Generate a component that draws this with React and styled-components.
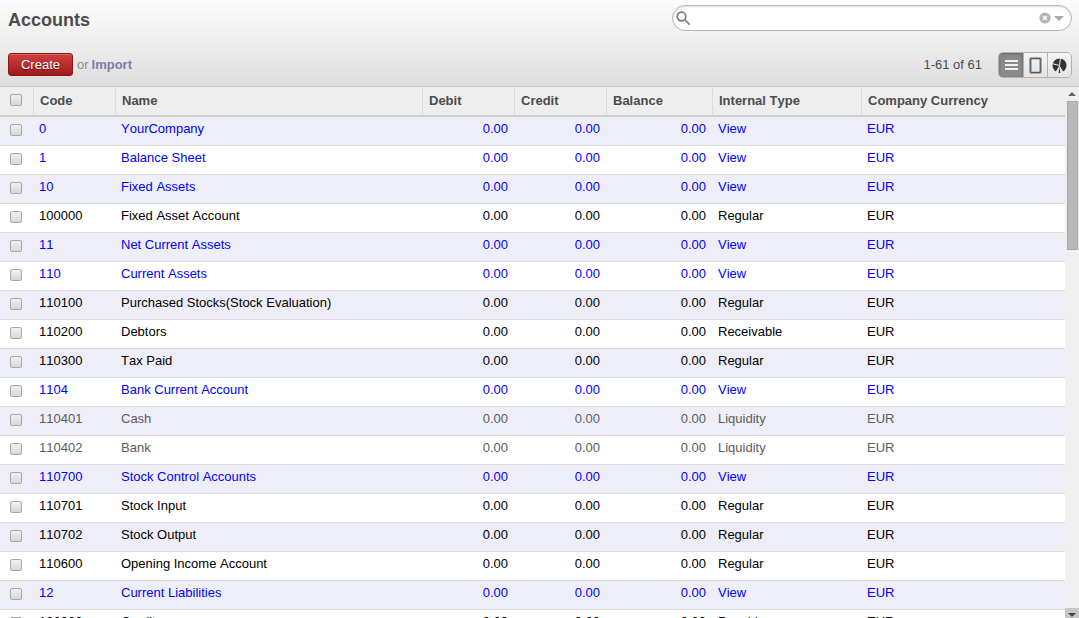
import React from "react";
import styled, { createGlobalStyle } from "styled-components";

const GlobalStyle = createGlobalStyle`
  html, body {
    margin: 0;
    padding: 0;
    height: 100%;
    overflow: hidden;
    background: #fff;
    font-family: "Liberation Sans", Arial, sans-serif;
    font-size: 13px;
    font-kerning: none;
    color: #4c4c4c;
  }
`;

const VIEW = "view";
const DIM = "dim";

const accounts = [
  ["0", "YourCompany", "View", VIEW],
  ["1", "Balance Sheet", "View", VIEW],
  ["10", "Fixed Assets", "View", VIEW],
  ["100000", "Fixed Asset Account", "Regular"],
  ["11", "Net Current Assets", "View", VIEW],
  ["110", "Current Assets", "View", VIEW],
  ["110100", "Purchased Stocks(Stock Evaluation)", "Regular"],
  ["110200", "Debtors", "Receivable"],
  ["110300", "Tax Paid", "Regular"],
  ["1104", "Bank Current Account", "View", VIEW],
  ["110401", "Cash", "Liquidity", DIM],
  ["110402", "Bank", "Liquidity", DIM],
  ["110700", "Stock Control Accounts", "View", VIEW],
  ["110701", "Stock Input", "Regular"],
  ["110702", "Stock Output", "Regular"],
  ["110600", "Opening Income Account", "Regular"],
  ["12", "Current Liabilities", "View", VIEW],
  ["120000", "Creditors", "Payable"],
];

const columns = [
  { label: "Code", width: 82 },
  { label: "Name", width: 307 },
  { label: "Debit", width: 92 },
  { label: "Credit", width: 92 },
  { label: "Balance", width: 106 },
  { label: "Internal Type", width: 149 },
  { label: "Company Currency" },
];

const SearchIcon = () => (
  <svg width="16" height="16" viewBox="0 0 16 16">
    <circle cx="6.5" cy="6.5" r="4.3" fill="none" stroke="#7a7a7a" strokeWidth="1.7" />
    <path d="M9.8 9.8 L14 14" stroke="#7f97ad" strokeWidth="2.2" strokeLinecap="round" />
  </svg>
);

const ClearIcon = () => (
  <svg width="12" height="12" viewBox="0 0 12 12">
    <circle cx="6" cy="6" r="5.6" fill="#b5b5b5" />
    <path d="M4 4 L8 8 M8 4 L4 8" stroke="#fff" strokeWidth="1.5" />
  </svg>
);

const ListIcon = () => (
  <svg width="13" height="10" viewBox="0 0 13 10">
    <path d="M0 0h13v2H0zM0 4h13v2H0zM0 8h13v2H0z" fill="#f0f0f0" />
  </svg>
);

const KanbanIcon = () => (
  <svg width="13" height="17" viewBox="0 0 13 17">
    <rect x="1" y="1" width="11" height="15" rx="1" fill="none" stroke="#c98a3c" strokeWidth="1.6" />
    <rect x="1.8" y="1.6" width="9.4" height="13.8" rx="0.6" fill="none" stroke="#3c5a78" strokeWidth="1.2" />
  </svg>
);

const GraphIcon = () => (
  <svg width="15" height="15" viewBox="0 0 15 15">
    <circle cx="7.5" cy="7.5" r="7" fill="#333" />
    <path d="M0 5.6 L7.5 7.5 L8.5 0" fill="none" stroke="#ececec" strokeWidth="1" />
    <path d="M7.5 7.5 L3 15 L12 15 Z" fill="#ececec" />
    <path d="M7.5 9 L6.6 15 L8.4 15 Z" fill="#333" />
  </svg>
);

export default function App() {
  return (
    <Page>
      <GlobalStyle />
      <ControlPanel>
        <TopRow>
          <Title>Accounts</Title>
          <SearchBox>
            <SearchIcon />
            <SearchInput />
            <ClearIcon />
            <Caret />
          </SearchBox>
        </TopRow>
        <BottomRow>
          <Actions>
            <CreateButton>Create</CreateButton>
            <OrText>or</OrText>
            <ImportLink>Import</ImportLink>
          </Actions>
          <Pager>
            <PagerText>1-61 of 61</PagerText>
            <Switcher>
              <SwitchButton $active>
                <ListIcon />
              </SwitchButton>
              <SwitchButton>
                <KanbanIcon />
              </SwitchButton>
              <SwitchButton>
                <GraphIcon />
              </SwitchButton>
            </Switcher>
          </Pager>
        </BottomRow>
      </ControlPanel>
      <Content>
        <TableClip>
          <Table>
            <colgroup>
              <col style={{ width: 33 }} />
              {columns.map((c) => (
                <col key={c.label} style={c.width ? { width: c.width } : undefined} />
              ))}
            </colgroup>
            <thead>
              <tr>
                <HeadCell>
                  <Check />
                </HeadCell>
                {columns.map((c) => (
                  <HeadCell key={c.label}>{c.label}</HeadCell>
                ))}
              </tr>
            </thead>
            <tbody>
              {accounts.map(([code, name, type, kind], i) => (
                <Row key={code} $kind={kind} $odd={i % 2 === 0}>
                  <CheckCell>
                    <Check />
                  </CheckCell>
                  <Cell>{code}</Cell>
                  <Cell>{name}</Cell>
                  <NumCell>0.00</NumCell>
                  <NumCell>0.00</NumCell>
                  <NumCell>0.00</NumCell>
                  <Cell>{type}</Cell>
                  <Cell>EUR</Cell>
                </Row>
              ))}
            </tbody>
          </Table>
        </TableClip>
        <ScrollBar>
          <ScrollButton>
            <ArrowUp />
          </ScrollButton>
          <ScrollTrack>
            <ScrollThumb />
          </ScrollTrack>
          <ScrollButton $down>
            <ArrowDown />
          </ScrollButton>
        </ScrollBar>
      </Content>
    </Page>
  );
}

const Page = styled.div`
  display: flex;
  flex-direction: column;
  height: 100vh;
  overflow: hidden;
`;

const ControlPanel = styled.div`
  flex: none;
  height: 87px;
  box-sizing: border-box;
  padding: 4px 7px 0 8px;
  background: linear-gradient(#fcfcfc, #dedede);
  border-bottom: 1px solid #cacaca;
  display: flex;
  flex-direction: column;
`;

const TopRow = styled.div`
  display: flex;
  justify-content: space-between;
  align-items: flex-start;
  height: 48px;
`;

const Title = styled.h2`
  margin: 0;
  font-size: 18px;
  line-height: 32px;
  font-weight: bold;
  color: #4c4c4c;
`;

const SearchBox = styled.div`
  width: 400px;
  height: 26px;
  box-sizing: border-box;
  margin-top: 1px;
  padding: 0 7px 0 2px;
  display: flex;
  align-items: center;
  gap: 2px;
  background: #fff;
  border: 1px solid #b8b8b8;
  border-radius: 13px;
  box-shadow: inset 0 1px 2px rgba(0, 0, 0, 0.15);
`;

const SearchInput = styled.div`
  flex: 1;
`;

const Caret = styled.span`
  width: 0;
  height: 0;
  margin-left: 1px;
  border-left: 5px solid transparent;
  border-right: 5px solid transparent;
  border-top: 5px solid #a8a8a8;
`;

const BottomRow = styled.div`
  display: flex;
  justify-content: space-between;
  align-items: flex-start;
  height: 26px;
`;

const Actions = styled.div`
  display: flex;
  align-items: center;
  margin-top: 1px;
`;

const CreateButton = styled.button`
  width: 65px;
  height: 23px;
  padding: 0;
  font: 13px "Liberation Sans", Arial, sans-serif;
  color: #fff;
  text-shadow: 0 1px 1px rgba(0, 0, 0, 0.4);
  background: linear-gradient(#d2403f, #a01a1b);
  border: 1px solid #8a1a1a;
  border-radius: 3px;
  box-shadow: inset 0 1px 0 rgba(255, 255, 255, 0.2);
`;

const OrText = styled.span`
  margin-left: 4px;
  color: #8a8a8a;
`;

const ImportLink = styled.a`
  margin-left: 3px;
  font-weight: bold;
  color: #7c7bad;
`;

const Pager = styled.div`
  display: flex;
  align-items: center;
`;

const PagerText = styled.span`
  margin: -2px 16px 0 0;
  color: #4c4c4c;
`;

const Switcher = styled.div`
  display: flex;
  height: 26px;
  box-sizing: border-box;
  border: 1px solid #b0b0b0;
  border-radius: 5px;
  overflow: hidden;
`;

const SwitchButton = styled.div`
  width: 24px;
  box-sizing: border-box;
  display: flex;
  align-items: center;
  justify-content: center;
  background: ${(p) => (p.$active ? "#8a8a8a" : "linear-gradient(#f4f4f4, #e4e4e4)")};
  box-shadow: ${(p) => (p.$active ? "inset 0 1px 3px rgba(0,0,0,0.3)" : "none")};
  & + & {
    border-left: 1px solid #b0b0b0;
  }
`;

const Content = styled.div`
  flex: 1;
  min-height: 0;
  display: flex;
`;

const TableClip = styled.div`
  flex: 1;
  min-width: 0;
  overflow: hidden;
`;

const Table = styled.table`
  width: 1065px;
  table-layout: fixed;
  border-collapse: separate;
  border-spacing: 0;
`;

const HeadCell = styled.th`
  height: 30px;
  box-sizing: border-box;
  padding: 0 6px 2px;
  text-align: left;
  font-size: 13px;
  font-weight: bold;
  color: #4c4c4c;
  background: #eee;
  border-left: 1px solid #dcdcdc;
  border-bottom: 2px solid #cfcfcf;
  &:first-child {
    border-left: none;
    padding: 0 0 2px 10px;
  }
`;

const Row = styled.tr`
  background: ${(p) => (p.$odd ? "#eeeef8" : "#fff")};
  color: ${(p) => (p.$kind === VIEW ? "#0000ff" : p.$kind === DIM ? "#5c5c5c" : "#000")};
`;

const Cell = styled.td`
  height: 29px;
  box-sizing: border-box;
  padding: 0 5px 6px 6px;
  white-space: nowrap;
  border-bottom: 1px solid #dcdcdc;
`;

const CheckCell = styled(Cell)`
  padding: 0 0 3px 10px;
`;

const NumCell = styled(Cell)`
  text-align: right;
  padding-right: 6px;
`;

const Check = styled.span`
  display: block;
  width: 12px;
  height: 12px;
  box-sizing: border-box;
  background: linear-gradient(#f0f0f0, #d8d8d8);
  border: 1px solid #a8a8a8;
  border-radius: 2px;
`;

const ScrollBar = styled.div`
  flex: none;
  width: 14px;
  display: flex;
  flex-direction: column;
  background: #efefef;
`;

const ScrollButton = styled.div`
  flex: none;
  height: ${(p) => (p.$down ? "10px" : "14px")};
  box-sizing: border-box;
  padding-top: ${(p) => (p.$down ? "4px" : "0")};
  display: flex;
  align-items: center;
  justify-content: center;
  background: ${(p) => (p.$down ? "#c8c8c8" : "transparent")};
`;

const ArrowUp = styled.span`
  width: 0;
  height: 0;
  border-left: 4px solid transparent;
  border-right: 4px solid transparent;
  border-bottom: 4px solid #666;
`;

const ArrowDown = styled.span`
  width: 0;
  height: 0;
  border-left: 4px solid transparent;
  border-right: 4px solid transparent;
  border-top: 4px solid #444;
`;

const ScrollTrack = styled.div`
  flex: 1;
  padding: 0 1px 0 2px;
`;

const ScrollThumb = styled.div`
  height: 149px;
  background: #b8b8b8;
  border: 1px solid #a8a8a8;
  box-sizing: border-box;
`;
